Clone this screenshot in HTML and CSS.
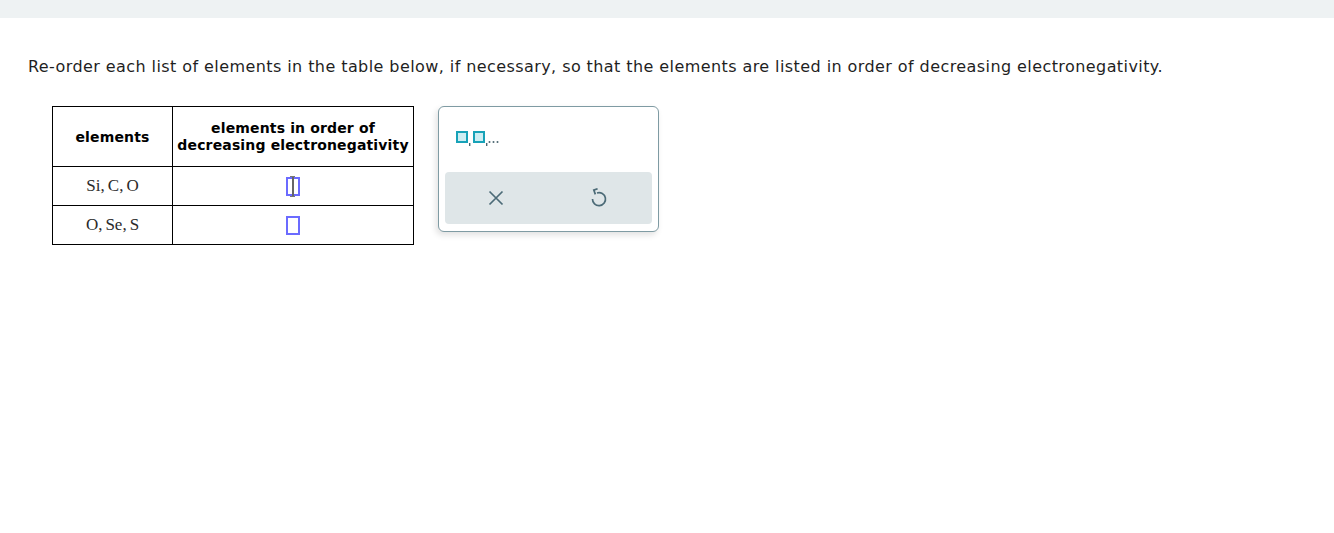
FILE: index.html
```html
<!DOCTYPE html>
<html lang="en">
<head>
    <meta charset="UTF-8">
    <title>Electronegativity order</title>
    <link rel="stylesheet" href="styles.css">
</head>
<body>
    <div class="top-bar"></div>

    <main class="question">
        <p class="prompt">Re-order each list of elements in the table below, if necessary, so that the elements are listed in order of decreasing electronegativity.</p>

        <div class="work-area">
            <table class="answer-table">
                <tr>
                    <th class="col-elements">elements</th>
                    <th class="col-order">elements in order of<br>decreasing electronegativity</th>
                </tr>
                <tr>
                    <td class="list">Si<span class="sep">,</span>C<span class="sep">,</span>O</td>
                    <td><span class="answer-box"><span class="cursor"></span></span></td>
                </tr>
                <tr>
                    <td class="list">O<span class="sep">,</span>Se<span class="sep">,</span>S</td>
                    <td><span class="answer-box"></span></td>
                </tr>
            </table>

            <div class="tool-panel">
                <div class="palette">
                    <svg width="46" height="16" viewBox="0 0 46 16">
                        <rect x="1" y="1" width="10" height="10" fill="#cdeef3" stroke="#17a2b8" stroke-width="2"/>
                        <rect x="13" y="12" width="1.4" height="3" fill="#4c6670"/>
                        <rect x="18" y="1" width="10" height="10" fill="#cdeef3" stroke="#17a2b8" stroke-width="2"/>
                        <rect x="30" y="12" width="1.4" height="3" fill="#4c6670"/>
                        <circle cx="33.5" cy="11" r="1" fill="#4c6670"/>
                        <circle cx="37.5" cy="11" r="1" fill="#4c6670"/>
                        <circle cx="41.5" cy="11" r="1" fill="#4c6670"/>
                    </svg>
                </div>
                <div class="actions">
                    <button class="icon-btn" aria-label="Clear">
                        <svg width="16" height="16" viewBox="0 0 16 16">
                            <path d="M1.5 1.5 L14.5 14.5 M14.5 1.5 L1.5 14.5" stroke="#4c6b77" stroke-width="1.7" fill="none"/>
                        </svg>
                    </button>
                    <button class="icon-btn" aria-label="Undo">
                        <svg width="20" height="20" viewBox="0 0 20 20">
                            <path d="M8 5 A6.5 6.5 0 1 1 3.5 11" stroke="#4c6b77" stroke-width="1.7" fill="none"/>
                            <path d="M9.5 2 H5.5 V6.5" stroke="#4c6b77" stroke-width="1.7" fill="none" transform="rotate(-20 5.5 4)"/>
                        </svg>
                    </button>
                </div>
            </div>
        </div>
    </main>
</body>
</html>
```

FILE: styles.css
```css
body {
    margin: 0;
    padding: 0;
    font-family: "DejaVu Sans", Verdana, sans-serif;
    color: #1f1f1f;
    background: #ffffff;
}

.top-bar {
    height: 18px;
    background-color: #eef2f3;
}

.question {
    padding: 0 28px;
}

.prompt {
    margin: 39px 0 0;
    font-size: 16px;
    line-height: 20px;
    letter-spacing: 0.42px;
}

.work-area {
    display: flex;
    align-items: flex-start;
    gap: 24px;
    margin: 29px 0 0 24px;
}

.answer-table {
    border-collapse: collapse;
    border: 1px solid #000;
}

.answer-table th,
.answer-table td {
    border: 1px solid #000;
    text-align: center;
    padding: 0;
}

.answer-table th {
    height: 58px;
    padding-top: 1px;
    font-size: 14px;
    font-weight: bold;
    line-height: 17px;
    letter-spacing: 0.15px;
    color: #000;
}

.col-elements {
    width: 119px;
}

.col-order {
    width: 240px;
}

.answer-table td {
    height: 38px;
}

.list {
    font-family: "Liberation Serif", "Times New Roman", serif;
    font-size: 17px;
    color: #2a2a2a;
}

.sep {
    margin-right: 3px;
}

.answer-box {
    display: inline-block;
    width: 10px;
    height: 15px;
    border: 2px solid #6b6bff;
    vertical-align: middle;
    position: relative;
}

.cursor {
    position: absolute;
    left: 3px;
    top: -3px;
    width: 3px;
    height: 21px;
    background:
        linear-gradient(#666, #666) center / 2px 100% no-repeat;
}

.cursor::before,
.cursor::after {
    content: "";
    position: absolute;
    left: -1px;
    width: 5px;
    height: 1px;
    background: #777;
}

.cursor::before { top: 0; }
.cursor::after { bottom: 0; }

.tool-panel {
    width: 207px;
    padding: 6px 6px 7px;
    border: 1px solid #7f9ba3;
    border-radius: 6px;
    background: #fff;
    box-shadow: -2px 3px 6px rgba(0, 0, 0, 0.12);
}

.palette {
    height: 59px;
    padding: 18px 0 0 11px;
    box-sizing: border-box;
}

.actions {
    display: flex;
    justify-content: space-around;
    align-items: center;
    height: 52px;
    background-color: #dfe6e8;
    border-radius: 4px;
}

.icon-btn {
    border: none;
    background: none;
    padding: 0;
    cursor: pointer;
    display: flex;
}
```
